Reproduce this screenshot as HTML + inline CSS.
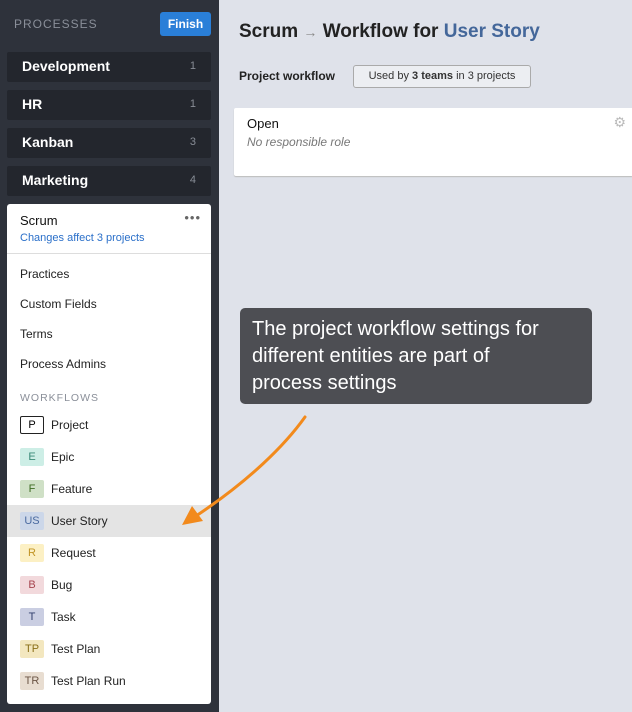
<!DOCTYPE html>
<html><head><style>
*{margin:0;padding:0;box-sizing:border-box}
body{width:632px;height:712px;overflow:hidden;background:#dfe2ea;font-family:"Liberation Sans",sans-serif;position:relative}
.sb{position:absolute;left:0;top:0;width:219px;height:712px;background:#2e323b}
.hd{position:absolute;left:14px;top:17px;color:#8a8f99;font-size:12px;letter-spacing:1px}
.fin{position:absolute;left:160px;top:12px;width:51px;height:24px;background:#2a7fd8;border-radius:3px;color:#fff;font-weight:bold;font-size:12px;text-align:center;line-height:24px}
.pi{position:absolute;left:7px;width:204px;height:30px;background:#23262d;border-radius:2px;color:#fff;font-weight:bold;font-size:14px;line-height:29px;padding-left:15px}
.pi span{position:absolute;right:15px;color:#888d96;font-weight:normal;font-size:11px}
.wp{position:absolute;left:7px;top:204px;width:204px;height:500px;background:#fff;border-radius:3px}
.t{position:absolute;left:13px;font-size:12px;color:#222}
.row{position:absolute;left:0;width:204px;height:32px}
.b{position:absolute;left:13px;top:7px;width:24px;height:18px;border-radius:2px;font-size:11px;text-align:center;line-height:18px}
.row .l{position:absolute;left:44px;top:9px;font-size:12px;color:#222}
</style></head><body>
<div class="sb"></div>
<div class="hd">PROCESSES</div>
<div class="fin">Finish</div>
<div class="pi" style="top:52px">Development<span>1</span></div>
<div class="pi" style="top:90px">HR<span>1</span></div>
<div class="pi" style="top:128px">Kanban<span>3</span></div>
<div class="pi" style="top:166px">Marketing<span>4</span></div>
<div class="wp">
 <div class="t" style="top:9px;font-size:13px;color:#111">Scrum</div>
 <div style="position:absolute;right:10px;top:6px;color:#666;font-size:13px;letter-spacing:1px">•••</div>
 <div class="t" style="top:28px;font-size:11px;color:#2a6fc9">Changes affect 3 projects</div>
 <div style="position:absolute;left:0;right:0;top:49px;border-top:1px solid #ddd"></div>
 <div class="t" style="top:63px">Practices</div>
 <div class="t" style="top:93px">Custom Fields</div>
 <div class="t" style="top:123px">Terms</div>
 <div class="t" style="top:153px">Process Admins</div>
 <div class="t" style="top:188px;font-size:10.5px;color:#8a8f99;letter-spacing:1px">WORKFLOWS</div>
 <div class="row" style="top:205px"><div class="b" style="border:1px solid #222;background:#fff;line-height:16px">P</div><div class="l">Project</div></div>
 <div class="row" style="top:237px"><div class="b" style="background:#cdeee6;color:#3a8a78">E</div><div class="l">Epic</div></div>
 <div class="row" style="top:269px"><div class="b" style="background:#cfe0c6;color:#3d6b22">F</div><div class="l">Feature</div></div>
 <div class="row" style="top:301px;background:#e4e4e4"><div class="b" style="background:#ccd7e9;color:#4a6aa0">US</div><div class="l">User Story</div></div>
 <div class="row" style="top:333px"><div class="b" style="background:#fcf0c4;color:#c29525">R</div><div class="l">Request</div></div>
 <div class="row" style="top:365px"><div class="b" style="background:#f2d9dc;color:#a6454f">B</div><div class="l">Bug</div></div>
 <div class="row" style="top:397px"><div class="b" style="background:#cacee2;color:#33406e">T</div><div class="l">Task</div></div>
 <div class="row" style="top:429px"><div class="b" style="background:#f3e7bf;color:#8a6f17">TP</div><div class="l">Test Plan</div></div>
 <div class="row" style="top:461px"><div class="b" style="background:#e8ddd1;color:#6b5545">TR</div><div class="l">Test Plan Run</div></div>
</div>
<div style="position:absolute;left:239px;top:21px;font-size:19px;font-weight:bold;color:#222">Scrum <span style="color:#888;font-weight:normal;font-size:14px">→</span> Workflow for <span style="color:#44679a">User Story</span></div>
<div style="position:absolute;left:239px;top:69px;font-size:12px;font-weight:bold;color:#222">Project workflow</div>
<div style="position:absolute;left:353px;top:65px;width:178px;height:23px;border:1px solid #aaa;border-radius:3px;background:#eceef2;font-size:11px;color:#333;text-align:center;line-height:21px">Used by <b>3 teams</b> in 3 projects</div>
<div style="position:absolute;left:234px;top:108px;width:398px;height:68px;background:#fff;border-radius:2px 0 0 2px;box-shadow:0 1px 1px #bbb">
 <div style="position:absolute;left:13px;top:8px;font-size:13px;color:#111">Open</div>
 <div style="position:absolute;left:13px;top:27px;font-size:12px;color:#777;font-style:italic">No responsible role</div>
 <div style="position:absolute;right:6px;top:6px;color:#bbb;font-size:14px">⚙</div>
</div>
<div style="position:absolute;left:240px;top:308px;width:352px;height:96px;background:#4d4e53;border-radius:5px;color:#fff;font-size:20px;line-height:27px;padding:8px 30px 0 12px">The project workflow settings for different entities are part of process settings</div>
<svg style="position:absolute;left:0;top:0" width="632" height="712">
 <path d="M305 417 C285 445 250 480 196 516" stroke="#f28a1c" stroke-width="3" fill="none" stroke-linecap="round"/>
 <path d="M182 525 L192 506 L203 521 Z" fill="#f28a1c"/>
</svg>
</body></html>
